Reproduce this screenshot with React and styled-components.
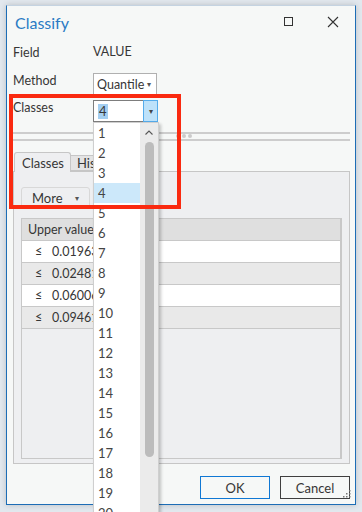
import styled, { createGlobalStyle } from "styled-components";

const GlobalStyle = createGlobalStyle`
  html, body {
    margin: 0;
    padding: 0;
  }
  body {
    width: 362px;
    height: 512px;
    overflow: hidden;
    background: #e2e8ee;
    font-family: Lato, "Noto Sans", sans-serif;
    color: #363636;
  }
  * {
    box-sizing: border-box;
  }
`;

const classRows = ["0.019635", "0.024818", "0.060061", "0.094612"];
const listItems = Array.from({ length: 20 }, (_, i) => i + 1);

const App = () => {
  return (
    <Page>
      <GlobalStyle />
      <Window>
        <TitleBar>
          <Title>Classify</Title>
          <Controls>
            <ControlButton>
              <svg width="10" height="10" viewBox="0 0 10 10">
                <rect x="0.5" y="0.5" width="8" height="8" fill="none" stroke="#333" strokeWidth="1" />
              </svg>
            </ControlButton>
            <ControlButton>
              <svg width="12" height="12" viewBox="0 0 12 12">
                <path d="M1 1 L11 11 M11 1 L1 11" stroke="#333" strokeWidth="1.1" />
              </svg>
            </ControlButton>
          </Controls>
        </TitleBar>

        <Form>
          <Row $h={22}>
            <Label>Field</Label>
            <Value>VALUE</Value>
          </Row>
          <Row $mt={6}>
            <Label>Method</Label>
            <Select>
              Quantile
              <Caret>▾</Caret>
            </Select>
          </Row>
          <Row $mt={5}>
            <Label>Classes</Label>
            <Combo>
              <ComboInput>
                <Selected>4</Selected>
              </ComboInput>
              <ComboButton>▾</ComboButton>
            </Combo>
          </Row>
        </Form>

        <Splitter>
          <Grip>
            <Dot />
            <Dot />
            <Dot />
          </Grip>
        </Splitter>

        <Tabs>
          <Tab $active>Classes</Tab>
          <Tab>Histogram</Tab>
        </Tabs>
        <Panel>
          <MoreButton>
            More
            <Caret>▾</Caret>
          </MoreButton>
          <Table>
            <HeaderRow>Upper value</HeaderRow>
            {classRows.map((v, i) => (
              <DataRow key={v} $alt={i % 2 === 1}>
                <Le>≤</Le>
                {v}
              </DataRow>
            ))}
          </Table>
        </Panel>

        <Footer>
          <Button $primary>OK</Button>
          <Button>Cancel</Button>
        </Footer>
        <ResizeGrip>
          <svg width="8" height="8" viewBox="0 0 8 8">
            <rect x="6" y="0" width="1.5" height="1.5" fill="#777" />
            <rect x="3" y="3" width="1.5" height="1.5" fill="#777" />
            <rect x="6" y="3" width="1.5" height="1.5" fill="#777" />
            <rect x="0" y="6" width="1.5" height="1.5" fill="#777" />
            <rect x="3" y="6" width="1.5" height="1.5" fill="#777" />
            <rect x="6" y="6" width="1.5" height="1.5" fill="#777" />
          </svg>
        </ResizeGrip>

        <DropList>
          <Items>
            {listItems.map((n) => (
              <Item key={n} $selected={n === 4}>
                {n}
              </Item>
            ))}
          </Items>
          <ScrollBar>
            <ScrollArrow>
              <svg width="8" height="5" viewBox="0 0 8 5">
                <path d="M0.5 4.5 L4 1 L7.5 4.5" fill="none" stroke="#555" strokeWidth="1.1" />
              </svg>
            </ScrollArrow>
            <Thumb />
          </ScrollBar>
        </DropList>
      </Window>
      <Highlight />
    </Page>
  );
};
export default App;

/******************* styled component *****************/

const Page = styled.div`
  position: relative;
  width: 362px;
  height: 512px;
  padding: 5px 0 0 6px;
  overflow: hidden;
`;

const Window = styled.div`
  position: relative;
  width: 350px;
  height: 500px;
  display: flex;
  flex-direction: column;
  background: #f6f8f7;
  border: 1px solid #1c6db6;
  border-top-color: #c4d3e1;
  box-shadow: 0 0 6px rgba(0, 0, 0, 0.18);
`;

const TitleBar = styled.div`
  display: flex;
  align-items: center;
  height: 32px;
  padding-left: 8px;
`;

const Title = styled.div`
  font-size: 16px;
  color: #2a7bc4;
`;

const Controls = styled.div`
  display: flex;
  margin-left: auto;
  align-self: stretch;
`;

const ControlButton = styled.div`
  width: 44px;
  display: flex;
  align-items: center;
  justify-content: center;
`;

const Form = styled.div`
  display: flex;
  flex-direction: column;
  margin: 7px 0 0 6px;
`;

const Row = styled.div`
  display: flex;
  align-items: flex-start;
  margin-top: ${(p) => p.$mt || 0}px;
  height: ${(p) => p.$h || 22}px;
`;

const Label = styled.div`
  width: 80px;
  font-size: 12.5px;
  line-height: 16px;
`;

const Value = styled.div`
  font-size: 12.5px;
  line-height: 14px;
`;

const Caret = styled.span`
  margin-left: auto;
  font-size: 8px;
  color: #555;
`;

const Select = styled.div`
  width: 64px;
  height: 22px;
  display: flex;
  align-items: center;
  padding: 0 5px 0 3px;
  background: #fff;
  border: 1px solid #b0b0b0;
  font-size: 12.5px;
`;

const Combo = styled.div`
  display: flex;
  width: 65px;
  height: 22px;
`;

const ComboInput = styled.div`
  flex: 1;
  display: flex;
  align-items: center;
  padding-left: 4px;
  background: #fff;
  border: 1px solid #7d7d7d;
  border-right: none;
  font-size: 13px;
`;

const Selected = styled.span`
  background: #a4cff1;
  padding: 0 1px;
  line-height: 15px;
`;

const ComboButton = styled.div`
  width: 15px;
  display: flex;
  align-items: center;
  justify-content: center;
  background: #bee2fa;
  border: 1px solid #56aceb;
  font-size: 8px;
  color: #444;
`;

const Splitter = styled.div`
  position: relative;
  height: 9px;
  margin: 10px 5px 0 6px;
  border-top: 2px solid #cdcdcd;
  border-bottom: 2px solid #cdcdcd;
`;

const Grip = styled.div`
  position: absolute;
  left: 163px;
  top: 0;
  display: flex;
  gap: 2px;
`;

const Dot = styled.span`
  width: 4px;
  height: 4px;
  border-radius: 50%;
  background: #cbcbcb;
`;

const Tabs = styled.div`
  display: flex;
  align-items: flex-end;
  height: 19px;
  margin: 11px 0 0 7px;
`;

const Tab = styled.div`
  position: relative;
  z-index: 1;
  height: ${(p) => (p.$active ? 20 : 16)}px;
  margin-bottom: ${(p) => (p.$active ? -1 : 0)}px;
  padding: ${(p) => (p.$active ? "1px 6px 0 7px" : "0 6px")};
  display: flex;
  align-items: center;
  font-size: 13px;
  background: ${(p) => (p.$active ? "#eeeff1" : "#e4e4e4")};
  border: 1px solid #c6c6c6;
  border-bottom: ${(p) => (p.$active ? "none" : "1px solid #c6c6c6")};
  border-left: ${(p) => (p.$active ? "1px solid #c6c6c6" : "none")};
  border-radius: ${(p) => (p.$active ? "3px 3px 0 0" : "0 2px 0 0")};
`;

const Panel = styled.div`
  display: flex;
  flex-direction: column;
  height: 293px;
  margin: 0 5px 0 6px;
  padding: 15px 7px 4px 7px;
  background: #eeeff1;
  border: 1px solid #c6c6c6;
`;

const MoreButton = styled.div`
  width: 69px;
  height: 22px;
  display: flex;
  align-items: center;
  padding: 0 10px 0 10px;
  border: 1px solid #d8d8d8;
  border-radius: 3px;
  font-size: 13px;
`;

const Table = styled.div`
  flex: 1;
  margin-top: 9px;
  border: 1px solid #c8c8c8;
  border-right-width: 2px;
`;

const HeaderRow = styled.div`
  height: 22px;
  display: flex;
  align-items: center;
  padding-left: 6px;
  background: #dfdfdf;
  border-bottom: 1px solid #c8c8c8;
  font-size: 12.5px;
`;

const DataRow = styled.div`
  height: 22px;
  display: flex;
  align-items: center;
  padding-left: 13px;
  background: ${(p) => (p.$alt ? "#e9e9e9" : "#fff")};
  border-bottom: 1px solid #c8c8c8;
  font-size: 12.5px;
`;

const Le = styled.span`
  width: 17px;
`;

const Footer = styled.div`
  display: flex;
  justify-content: flex-end;
  gap: 10px;
  margin: 12px 5px 0 0;
`;

const Button = styled.div`
  width: 70px;
  height: 23px;
  display: flex;
  align-items: center;
  justify-content: center;
  font-size: 13px;
  background: #f6f8f7;
  border: 1px solid ${(p) => (p.$primary ? "#1078d4" : "#3f3f3f")};
`;

const ResizeGrip = styled.div`
  position: absolute;
  right: 4px;
  bottom: 6px;
  display: flex;
`;

const DropList = styled.div`
  position: absolute;
  left: 86px;
  top: 116px;
  width: 66px;
  height: 400px;
  z-index: 5;
  display: flex;
  background: #fff;
  border: 1px solid #cfcfcf;
  box-shadow: 2px 2px 3px rgba(0, 0, 0, 0.22);
`;

const Items = styled.div`
  flex: 1;
`;

const Item = styled.div`
  height: 20px;
  display: flex;
  align-items: center;
  padding-left: 4px;
  font-size: 13px;
  color: #444;
  background: ${(p) => (p.$selected ? "#cce8fa" : "transparent")};
`;

const ScrollBar = styled.div`
  width: 18px;
  display: flex;
  flex-direction: column;
  align-items: center;
  background: #ebebeb;
`;

const ScrollArrow = styled.div`
  height: 19px;
  display: flex;
  align-items: center;
  justify-content: center;
`;

const Thumb = styled.div`
  width: 9px;
  height: 315px;
  margin-left: 1px;
  border-radius: 5px;
  background: #bcbcbc;
`;

const Highlight = styled.div`
  position: absolute;
  left: 9px;
  top: 94px;
  width: 172px;
  height: 115px;
  z-index: 10;
  border: 4px solid #fa2a10;
`;
